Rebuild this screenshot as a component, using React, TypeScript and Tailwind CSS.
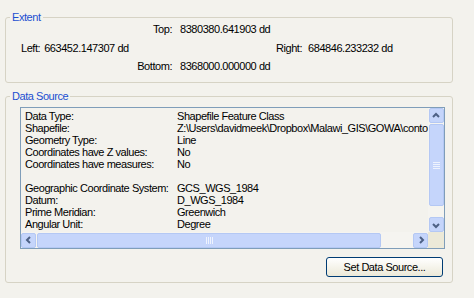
import React from "react";

const rows: [string, string][] = [
  ["Data Type:", "Shapefile Feature Class"],
  ["Shapefile:", "Z:\\Users\\davidmeek\\Dropbox\\Malawi_GIS\\GOWA\\contours.shp"],
  ["Geometry Type:", "Line"],
  ["Coordinates have Z values:", "No"],
  ["Coordinates have measures:", "No"],
  ["", ""],
  ["Geographic Coordinate System:", "GCS_WGS_1984"],
  ["Datum:", "D_WGS_1984"],
  ["Prime Meridian:", "Greenwich"],
  ["Angular Unit:", "Degree"],
];

function Chevron({ dir }: { dir: "up" | "down" | "left" | "right" }) {
  const d =
    dir === "up"
      ? "M2 6 L5 3 L8 6"
      : dir === "down"
      ? "M2 4 L5 7 L8 4"
      : dir === "left"
      ? "M6 2 L3 5 L6 8"
      : "M4 2 L7 5 L4 8";
  return (
    <svg width="10" height="10" viewBox="0 0 10 10">
      <path d={d} fill="none" stroke="#4d6185" strokeWidth="2" />
    </svg>
  );
}

function ScrollBtn({ dir }: { dir: "up" | "down" | "left" | "right" }) {
  return (
    <div className="w-[15px] h-[15px] shrink-0 rounded-[2px] bg-[#c5d5fb] border border-[#b4c8f4] flex items-center justify-center">
      <Chevron dir={dir} />
    </div>
  );
}

export default function App() {
  return (
    <div
      className="w-[474px] h-[298px] bg-[#f3f2ed] text-[11px] leading-[12px] tracking-[-0.45px] text-black overflow-hidden"
      style={{ fontFamily: '"Liberation Sans", Arial, sans-serif' }}
    >
      <div className="pt-[17px] pl-[5px]">
        {/* Extent */}
        <div className="relative w-[448px] h-[66px] border border-[#d6d3c5] rounded-[3px]">
          <div className="absolute left-[4px] top-[-7px] px-[2px] bg-[#f3f2ed] text-[#1b4fd1]">Extent</div>
          <div className="pt-[5px] flex flex-col">
            <div className="flex h-[12px]">
              <div className="w-[166px] text-right">Top:</div>
              <div className="ml-[8px]">8380380.641903 dd</div>
            </div>
            <div className="flex h-[12px] mt-[7px]">
              <div className="w-[270px] pl-[15px] flex">
                <span>Left:</span>
                <span className="ml-[4px]">663452.147307 dd</span>
              </div>
              <div className="flex">
                <span>Right:</span>
                <span className="ml-[6px]">684846.233232 dd</span>
              </div>
            </div>
            <div className="flex h-[12px] mt-[6px]">
              <div className="w-[166px] text-right">Bottom:</div>
              <div className="ml-[8px]">8368000.000000 dd</div>
            </div>
          </div>
        </div>

        {/* Data Source */}
        <div className="relative mt-[13px] w-[448px] h-[187px] border border-[#d6d3c5] rounded-[3px]">
          <div className="absolute left-[4px] top-[-7px] px-[2px] bg-[#f3f2ed] text-[#1b4fd1]">Data Source</div>
          <div className="ml-[14px] mt-[10px] w-[425px] h-[142px] border border-[#7f9db9] flex flex-col">
            <div className="flex flex-1 min-h-0">
              <div className="flex-1 min-w-0 overflow-hidden pt-[2px] pl-[4px] bg-[#f3f2ed]">
                {rows.map(([k, v], i) => (
                  <div key={i} className="flex h-[12px] whitespace-nowrap">
                    <div className="w-[152px] shrink-0">{k}</div>
                    <div>{v}</div>
                  </div>
                ))}
              </div>
              <div className="w-[16px] bg-[#f5f4f0] flex flex-col items-center">
                <ScrollBtn dir="up" />
                <div className="relative w-[15px] h-[82px] mt-[1px] rounded-[2px] bg-[#c5d5fb] border border-[#b4c8f4] flex items-center justify-center">
                  <div className="flex flex-col gap-[1px]">
                    <div className="w-[7px] h-[1px] bg-[#eef3fe]" />
                    <div className="w-[7px] h-[1px] bg-[#eef3fe]" />
                    <div className="w-[7px] h-[1px] bg-[#eef3fe]" />
                    <div className="w-[7px] h-[1px] bg-[#eef3fe]" />
                  </div>
                </div>
                <div className="flex-1" />
                <ScrollBtn dir="down" />
              </div>
            </div>
            <div className="flex h-[16px] bg-[#f5f4f0] items-center">
              <ScrollBtn dir="left" />
              <div className="w-[344px] h-[15px] ml-[1px] rounded-[2px] bg-[#c5d5fb] border border-[#b4c8f4] flex items-center justify-center">
                <div className="flex gap-[1px]">
                  <div className="w-[1px] h-[7px] bg-[#eef3fe]" />
                  <div className="w-[1px] h-[7px] bg-[#eef3fe]" />
                  <div className="w-[1px] h-[7px] bg-[#eef3fe]" />
                  <div className="w-[1px] h-[7px] bg-[#eef3fe]" />
                </div>
              </div>
              <div className="flex-1" />
              <ScrollBtn dir="right" />
              <div className="w-[16px] h-[16px] bg-[#ece9d8]" />
            </div>
          </div>
          <div className="flex justify-end mr-[9px] mt-[8px]">
            <div className="w-[117px] h-[20px] rounded-[3px] border border-[#003c74] bg-gradient-to-b from-[#ffffff] to-[#ece9d8] flex items-center justify-center">
              Set Data Source...
            </div>
          </div>
        </div>
      </div>
    </div>
  );
}
